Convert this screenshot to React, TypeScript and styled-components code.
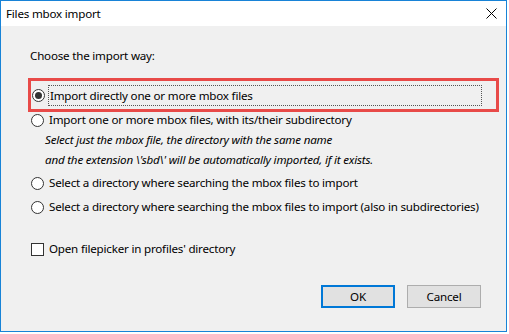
import React from "react";
import styled, { createGlobalStyle } from "styled-components";

const Global = createGlobalStyle`
  html, body { margin: 0; padding: 0; background: #ffffff; }
  body { font-family: "Noto Sans", "Liberation Sans", sans-serif; font-size: 11.6px; color: #000; letter-spacing: -0.2px; }
`;

const Window = styled.div`
  box-sizing: border-box;
  width: 507px;
  height: 332px;
  border: 1px solid #1883d7;
  display: flex;
  flex-direction: column;
  background: #f0f0f0;
`;

const TitleBar = styled.div`
  height: 25px;
  background: #ffffff;
  display: flex;
  align-items: center;
  justify-content: space-between;
  padding: 0 9px 0 5px;
`;

const Title = styled.span`
  line-height: 16px;
`;

const Body = styled.div`
  flex: 1;
  display: flex;
  flex-direction: column;
  padding: 22px 25px 0 30px;
`;

const Heading = styled.div`
  line-height: 15px;
  margin-left: -1px;
`;

const Highlight = styled.div`
  margin: 15px 0 0 -3px;
  width: 471px;
  height: 34px;
  box-sizing: border-box;
  border: 3px solid #e84a48;
  display: flex;
  align-items: center;
  padding-left: 1px;
`;

const Row = styled.label<{ $gap?: number }>`
  display: flex;
  align-items: center;
  height: 16px;
  margin-top: ${(p) => p.$gap ?? 0}px;
  line-height: 16px;
  white-space: nowrap;
`;

const Radio = styled.span<{ $checked?: boolean }>`
  box-sizing: border-box;
  width: 13px;
  height: 13px;
  border-radius: 50%;
  border: 1px solid #333333;
  background: #ffffff;
  display: flex;
  align-items: center;
  justify-content: center;
  flex-shrink: 0;
  &::after {
    content: "";
    display: ${(p) => (p.$checked ? "block" : "none")};
    width: 7px;
    height: 7px;
    border-radius: 50%;
    background: #333333;
  }
`;

const Check = styled.span`
  box-sizing: border-box;
  width: 13px;
  height: 13px;
  border: 1px solid #333333;
  background: #ffffff;
  flex-shrink: 0;
`;

const Label = styled.span<{ $focus?: boolean }>`
  margin-left: ${(p) => (p.$focus ? 3 : 5)}px;
  ${(p) =>
    p.$focus
      ? `border: 1px dotted #555; padding: 1px 0 1px 1px; width: 434px; box-sizing: border-box; line-height: 17px;`
      : ``}
`;

const Note = styled.div`
  margin: 2px 0 0 14px;
  font-style: italic;
  line-height: 20px;
`;

const Buttons = styled.div`
  display: flex;
  justify-content: flex-end;
  gap: 12px;
  margin-top: 28px;
`;

const Button = styled.button<{ $default?: boolean }>`
  box-sizing: border-box;
  width: 74px;
  height: 23px;
  background: #e1e1e1;
  border: ${(p) => (p.$default ? "2px solid #0078d7" : "1px solid #adadad")};
  font-family: inherit;
  font-size: 11.6px;
  letter-spacing: -0.2px;
  color: #000;
  padding: 0;
`;

const CloseIcon = () => (
  <svg width="11" height="11" viewBox="0 0 11 11">
    <path d="M0.5 0.5 L10.5 10.5 M10.5 0.5 L0.5 10.5" stroke="#000" strokeWidth="1" />
  </svg>
);

export default function App() {
  return (
    <>
      <Global />
      <Window>
        <TitleBar>
          <Title>Files mbox import</Title>
          <CloseIcon />
        </TitleBar>
        <Body>
          <Heading>Choose the import way:</Heading>
          <Highlight>
            <Row>
              <Radio $checked />
              <Label $focus>Import directly one or more mbox files</Label>
            </Row>
          </Highlight>
          <Row>
            <Radio />
            <Label>Import one or more mbox files, with its/their subdirectory</Label>
          </Row>
          <Note>
            <div>Select just the mbox file, the directory with the same name</div>
            <div>{"and the extension \\'sbd\\' will be automatically imported, if it exists."}</div>
          </Note>
          <Row $gap={5}>
            <Radio />
            <Label>Select a directory where searching the mbox files to import</Label>
          </Row>
          <Row $gap={8}>
            <Radio />
            <Label>Select a directory where searching the mbox files to import (also in subdirectories)</Label>
          </Row>
          <Row $gap={26}>
            <Check />
            <Label>Open filepicker in profiles' directory</Label>
          </Row>
          <Buttons>
            <Button $default>OK</Button>
            <Button>Cancel</Button>
          </Buttons>
        </Body>
      </Window>
    </>
  );
}
